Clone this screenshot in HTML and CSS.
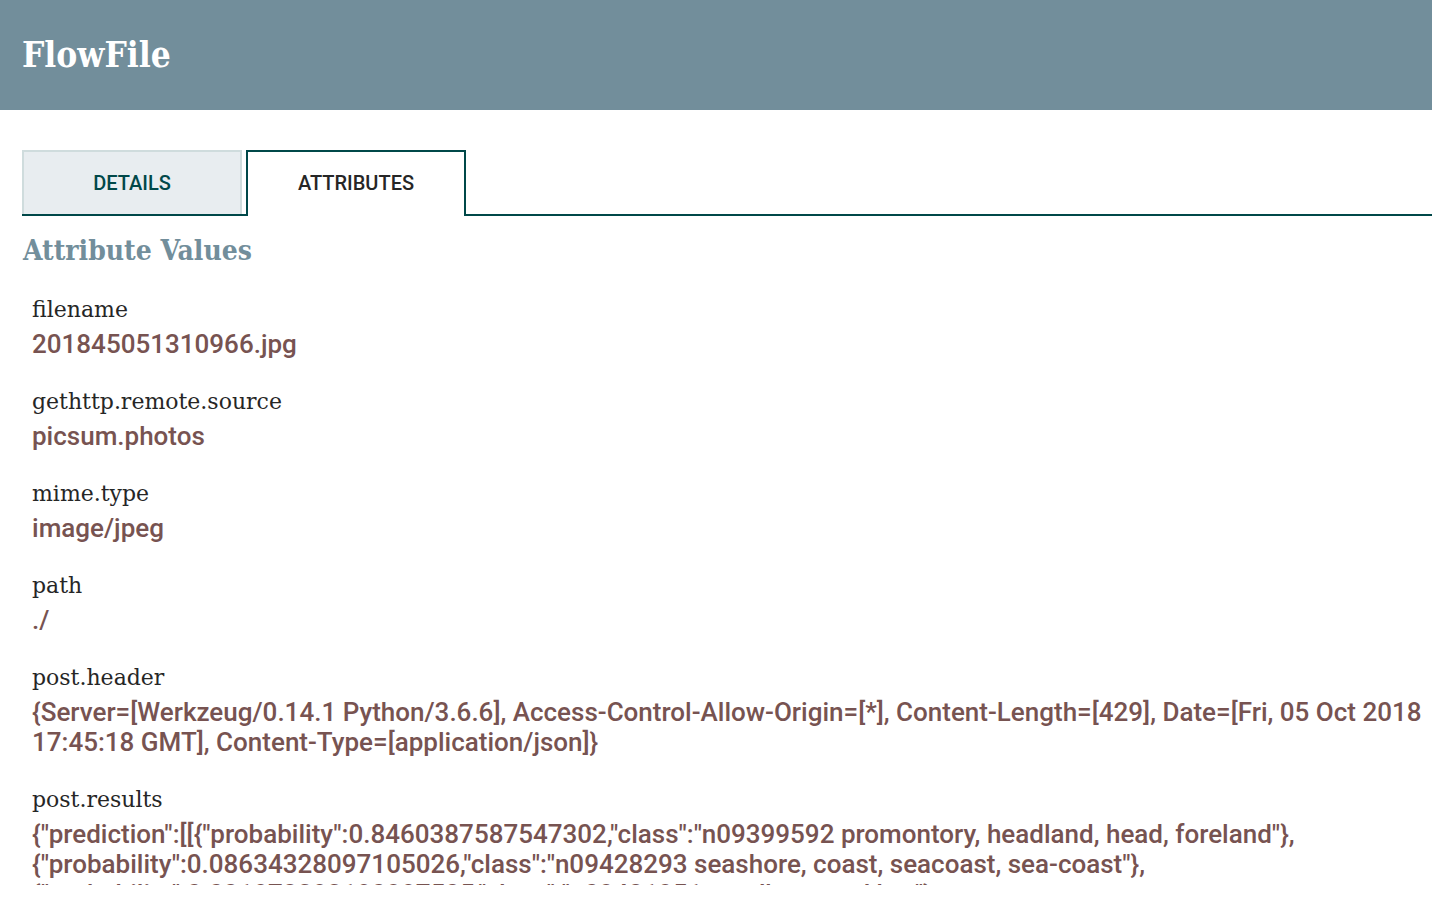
FILE: index.html
```html
<!DOCTYPE html>
<html lang="en">
<head>
  <meta charset="UTF-8" />
  <title>FlowFile</title>
  <link rel="stylesheet" href="styles.css">
</head>
<body>

  <div class="dialog-header">FlowFile</div>

  <div class="dialog-body">
    <div class="tabs">
      <div class="tab">DETAILS</div>
      <div class="tab tab-active">ATTRIBUTES</div>
    </div>

    <div class="tab-content">
      <h2 class="section-title">Attribute Values</h2>

      <div class="attr">
        <div class="attr-name">filename</div>
        <div class="attr-value">201845051310966.jpg</div>
      </div>
      <div class="attr">
        <div class="attr-name">gethttp.remote.source</div>
        <div class="attr-value">picsum.photos</div>
      </div>
      <div class="attr">
        <div class="attr-name">mime.type</div>
        <div class="attr-value">image/jpeg</div>
      </div>
      <div class="attr">
        <div class="attr-name">path</div>
        <div class="attr-value">./</div>
      </div>
      <div class="attr">
        <div class="attr-name">post.header</div>
        <div class="attr-value">{Server=[Werkzeug/0.14.1 Python/3.6.6], Access-Control-Allow-Origin=[*], Content-Length=[429], Date=[Fri, 05 Oct 2018 17:45:18 GMT], Content-Type=[application/json]}</div>
      </div>
      <div class="attr">
        <div class="attr-name">post.results</div>
        <div class="attr-value">{"prediction":[[{"probability":0.8460387587547302,"class":"n09399592 promontory, headland, head, foreland"},<br>{"probability":0.08634328097105026,"class":"n09428293 seashore, coast, seacoast, sea-coast"},<br>{"probability":0.021872383180987525,"class":"n09421951 sandbar, sand bar"},<br>{"probability":0.010387124054133892,"class":"n03216828 dock, dockage, docking facility"}]]}</div>
      </div>
    </div>
  </div>

</body>
</html>
```

FILE: styles.css
```css
body {
  margin: 0;
  background: #fff;
  color: #262626;
  font-family: Roboto, "Liberation Sans", sans-serif;
}
.dialog-header {
  height: 110px;
  line-height: 110px;
  padding-left: 22px;
  background-color: #728e9b;
  color: #fff;
  font-family: "Roboto Slab", "DejaVu Serif", serif;
  font-weight: bold;
  font-size: 35px;
  font-stretch: condensed;
}
.dialog-body {
  padding-top: 40px;
  padding-left: 22px;
}
.tabs {
  display: flex;
  gap: 4px;
  border-bottom: 2px solid #004849;
}
.tab {
  width: 216px;
  height: 62px;
  line-height: 62px;
  text-align: center;
  font-size: 20px;
  font-weight: 500;
  color: #004849;
  background-color: #e8edf0;
  border: 2px solid #cfdcdd;
  border-bottom: none;
}
.tab-active {
  height: 64px;
  margin-bottom: -2px;
  background-color: #fff;
  color: #262626;
  border-color: #004849;
}
.tab-content {
  height: 669px;
  overflow: hidden;
  padding-right: 10px;
}
.section-title {
  margin: 17px 0 22px 1px;
  line-height: 36px;
  font-family: "Roboto Slab", "DejaVu Serif", serif;
  font-weight: bold;
  font-size: 28px;
  font-stretch: condensed;
  color: #728e9b;
}
.attr {
  padding-left: 10px;
  margin-bottom: 24px;
}
.attr-name {
  line-height: 38px;
  font-family: "Roboto Slab", "DejaVu Serif", serif;
  font-size: 22px;
  color: #262626;
}
.attr-value {
  line-height: 30px;
  font-size: 26px;
  font-weight: 500;
  color: #775351;
}
```
